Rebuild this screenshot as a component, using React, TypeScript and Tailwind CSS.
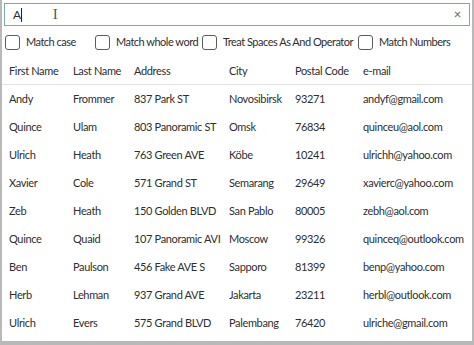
const rows = [
  ["Andy", "Frommer", "837 Park ST", "Novosibirsk", "93271", "andyf@gmail.com"],
  ["Quince", "Ulam", "803 Panoramic ST", "Omsk", "76834", "quinceu@aol.com"],
  ["Ulrich", "Heath", "763 Green AVE", "Köbe", "10241", "ulrichh@yahoo.com"],
  ["Xavier", "Cole", "571 Grand ST", "Semarang", "29649", "xavierc@yahoo.com"],
  ["Zeb", "Heath", "150 Golden BLVD", "San Pablo", "80005", "zebh@aol.com"],
  ["Quince", "Quaid", "107 Panoramic AVI", "Moscow", "99326", "quinceq@outlook.com"],
  ["Ben", "Paulson", "456 Fake AVE S", "Sapporo", "81399", "benp@yahoo.com"],
  ["Herb", "Lehman", "937 Grand AVE", "Jakarta", "23211", "herbl@outlook.com"],
  ["Ulrich", "Evers", "575 Grand BLVD", "Palembang", "76420", "ulriche@gmail.com"],
];

const headers = ["First Name", "Last Name", "Address", "City", "Postal Code", "e-mail"];

const cols = "grid grid-cols-[64px_61px_95px_66px_68px_1fr] pl-[7px]";

function Check({ label }: { label: string }) {
  return (
    <label className="flex items-center gap-[6px] whitespace-nowrap tracking-[-0.5px]">
      <span className="w-[15px] h-[15px] shrink-0 rounded-[3px] border border-[#5c5c5c] bg-white" />
      <span>{label}</span>
    </label>
  );
}

export default function App() {
  return (
    <div
      className="w-[474px] h-[345px] bg-white border-l-2 border-r-2 border-b-4 border-[#b9b9b9] text-[11px] tracking-[-0.35px] text-[#2e2e2e] overflow-hidden"
      style={{ fontFamily: 'Lato, sans-serif' }}
    >
      {/* search */}
      <div className="px-[2px] pt-[3px]">
        <div className="h-[23px] border border-[#7fa7b0] flex items-center pl-[8px] pr-[8px]">
          <span className="flex items-center text-[12px]">
            A<span className="inline-block w-px h-[14px] bg-[#222]" />
          </span>
          <span
            className="ml-[31px] text-[#555] text-[15px] leading-none"
            style={{ fontFamily: '"Liberation Serif", serif' }}
          >
            I
          </span>
          <span className="ml-auto text-[#666] text-[13px] leading-none">×</span>
        </div>
      </div>

      {/* options */}
      <div className="grid grid-cols-[90px_107px_156px_1fr] items-center h-[31px] pl-[3px] pt-[1px]">
        <Check label="Match case" />
        <Check label="Match whole word" />
        <Check label="Treat Spaces As And Operator" />
        <Check label="Match Numbers" />
      </div>

      {/* header */}
      <div className={`${cols} h-[28px] pt-[1px] items-center border-b border-[#e3e3e3] whitespace-nowrap`}>
        {headers.map((h) => (
          <div key={h}>{h}</div>
        ))}
      </div>

      {/* rows */}
      {rows.map((r, i) => (
        <div key={i} className={`${cols} h-[28px] items-center whitespace-nowrap`}>
          {r.map((c, j) => (
            <div key={j} className="overflow-hidden">{c}</div>
          ))}
        </div>
      ))}
    </div>
  );
}
